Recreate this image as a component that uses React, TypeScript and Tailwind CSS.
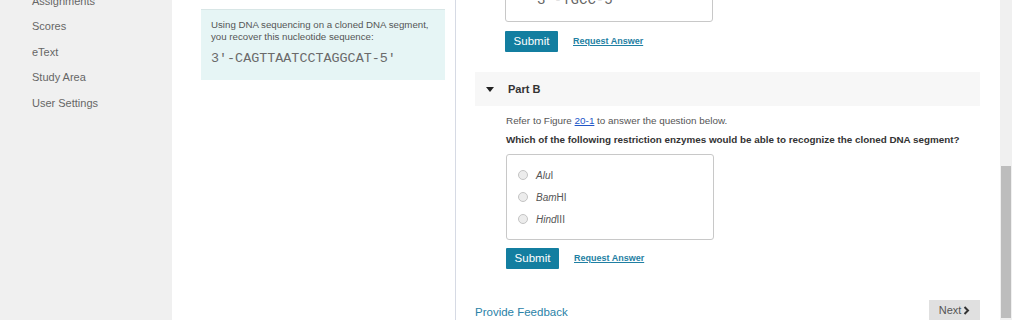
import React from "react";

const NAV_ITEMS = ["Assignments", "Scores", "eText", "Study Area", "User Settings"];

const OPTIONS = [
  { italic: "Alu", rest: "I" },
  { italic: "Bam", rest: "HI" },
  { italic: "Hind", rest: "III" },
];

function SubmitRow() {
  return (
    <div className="flex items-center">
      <button className="h-[21px] w-[53px] bg-[#137ea0] text-[11.5px] text-white rounded-[1px]">
        Submit
      </button>
      <a className="ml-[15px] text-[9px] font-bold text-[#1f7fa3] underline">Request Answer</a>
    </div>
  );
}

export default function App() {
  return (
    <div
      className="flex h-[320px] w-[1024px] overflow-hidden bg-white text-[#555]"
      style={{ fontFamily: '"Liberation Sans", Arial, sans-serif' }}
    >
      {/* Sidebar */}
      <div className="w-[172px] shrink-0 bg-[#f0f0f0]">
        <div className="-mt-[12px] flex flex-col pl-[32px]">
          {NAV_ITEMS.map((item) => (
            <div key={item} className="flex h-[25.5px] items-center text-[11px] text-[#666]">
              {item}
            </div>
          ))}
        </div>
      </div>

      {/* Left pane */}
      <div className="w-[284px] shrink-0 border-r border-[#d6dae4] pl-[29px] pt-[9px]">
        <div className="w-[244px] h-[71px] border-t border-[#d8e6e6] bg-[#e6f5f5] px-[10px] pt-[9px]">
          <p className="whitespace-nowrap text-[9.7px] leading-[12px] text-[#555]">
            Using DNA sequencing on a cloned DNA segment,
            <br />
            you recover this nucleotide sequence:
          </p>
          <p
            className="mt-[9px] text-[13.4px] leading-[14px] text-[#6a6a6a]"
            style={{ fontFamily: '"Liberation Mono", "Courier New", monospace' }}
          >
            3'-CAGTTAATCCTAGGCAT-5'
          </p>
        </div>
      </div>

      {/* Right pane */}
      <div className="flex flex-1 flex-col pl-[19px] pr-[20px]">
        <div className="pl-[30px]">
          <div className="-mt-[18px] h-[40px] w-[208px] rounded-[3px] border border-[#c8c8c8] pl-[31px] pt-[10px] text-[14px] leading-[13px]">
            <span
              className="text-[#666]"
              style={{ fontFamily: '"Liberation Mono", "Courier New", monospace' }}
            >
              3'-TGCC-5'
            </span>
          </div>
          <div className="mt-[9px]">
            <SubmitRow />
          </div>
        </div>

        <div className="mt-[20px] flex h-[34px] items-center bg-[#f7f7f7] pl-[11px]">
          <svg width="8" height="5" viewBox="0 0 8 5" className="mr-[14px]">
            <path d="M0 0h8L4 5z" fill="#222" />
          </svg>
          <span className="text-[11px] font-bold text-[#333]">Part B</span>
        </div>

        <div className="pl-[31px]">
          <p className="mt-[9px] whitespace-nowrap text-[9.9px] leading-[12px] text-[#555]">
            Refer to Figure <a className="text-[#2156c8] underline">20-1</a> to answer the question below.
          </p>
          <p className="mt-[6px] whitespace-nowrap text-[9.85px] font-bold leading-[13px] text-[#333]">
            Which of the following restriction enzymes would be able to recognize the cloned DNA segment?
          </p>
          <div className="mt-[8px] flex h-[86px] w-[208px] flex-col justify-center gap-[9px] rounded-[3px] border border-[#c8c8c8] pl-[11px]">
            {OPTIONS.map((o) => (
              <label key={o.italic} className="flex h-[13px] items-center">
                <span className="h-[10px] w-[10px] rounded-full border border-[#c4c4c4] bg-[#ececec]" />
                <span className="ml-[8px] text-[10px] text-[#555]">
                  <i>{o.italic}</i>
                  {o.rest}
                </span>
              </label>
            ))}
          </div>
          <div className="mt-[8px]">
            <SubmitRow />
          </div>
        </div>

        <div className="mt-auto flex items-end justify-between">
          <a className="-mb-[1px] text-[11.5px] text-[#2a82a7]">Provide Feedback</a>
          <button className="flex h-[21px] w-[51px] items-center justify-center bg-[#e0e0e0] text-[11px] text-[#555] -mb-[1px]">
            Next
            <svg width="7" height="9" viewBox="0 0 7 9" className="ml-[2px]">
              <path d="M1.5 1l3.5 3.5L1.5 8" stroke="#333" strokeWidth="2" fill="none" />
            </svg>
          </button>
        </div>
      </div>

      {/* Scrollbar */}
      <div className="flex w-[12px] shrink-0 flex-col bg-[#f0f0f0] px-[1px] pt-[166px] pb-[2px]">
        <div className="flex-1 bg-[#bdbdbd]" />
      </div>
      <div className="w-[12px] shrink-0" />
    </div>
  );
}
